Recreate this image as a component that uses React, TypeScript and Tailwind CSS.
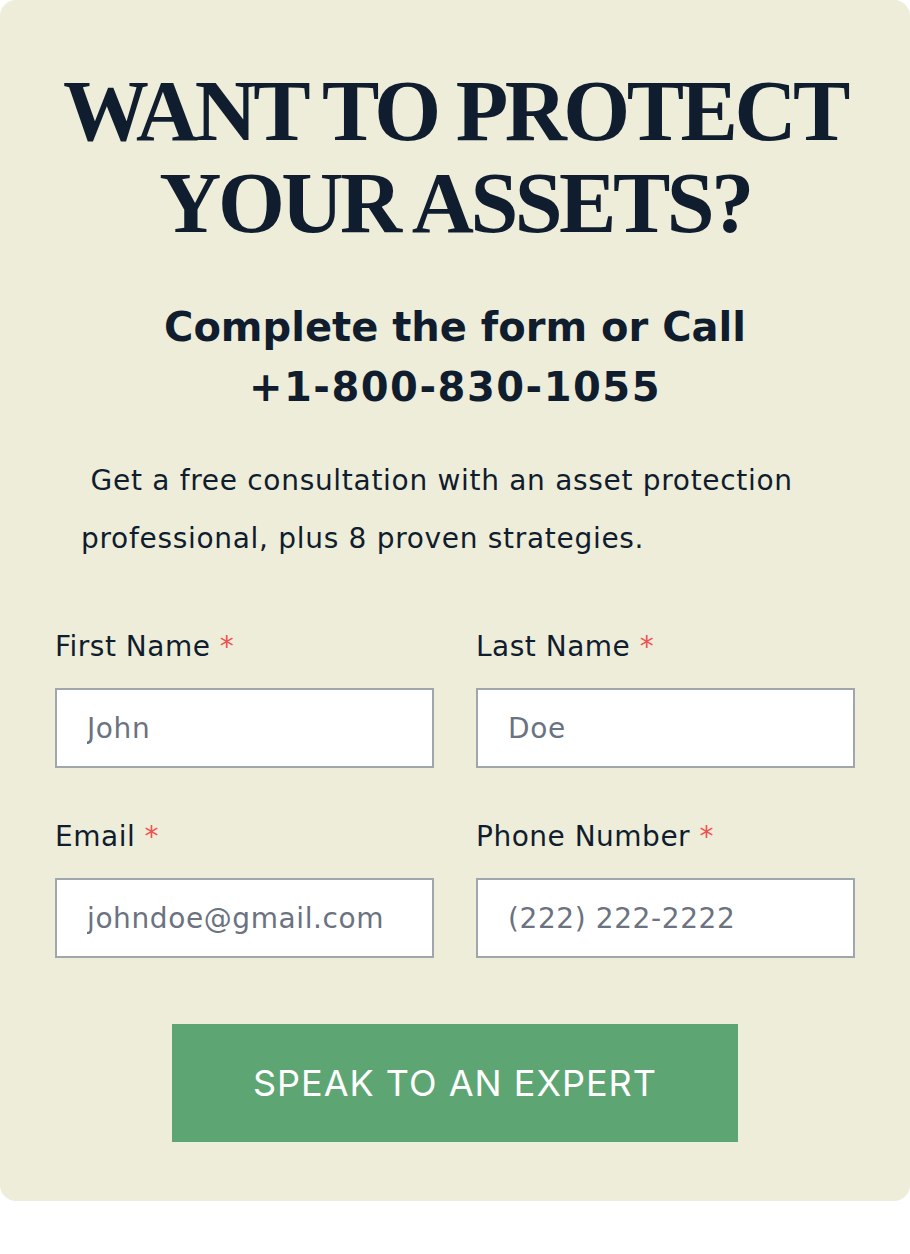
import React from 'react';

const fields = [
  { label: 'First Name', placeholder: 'John', type: 'text' },
  { label: 'Last Name', placeholder: 'Doe', type: 'text' },
  { label: 'Email', placeholder: 'johndoe@gmail.com', type: 'email' },
  { label: 'Phone Number', placeholder: '(222) 222-2222', type: 'tel' },
];

export default function App() {
  return (
    <div className="min-h-[1254px] bg-white font-['DejaVu_Sans',sans-serif] text-[#0f1d2e]">
      <div className="rounded-2xl bg-[#eeedd9] px-[55px] pb-[59px] pt-[65px]">
        <h1 className="text-center font-['Liberation_Serif',serif] text-[86px] font-bold uppercase leading-[92px] tracking-[-3.5px]">
          Want to protect your assets?
        </h1>

        <h2 className="mt-[48px] text-center text-[40px] font-bold leading-[60px]">
          Complete the form or Call
          <br />
          <span className="tracking-[1.5px]">+1-800-830-1055</span>
        </h2>

        <p className="mt-[35px] px-[26px] text-[28px] leading-[58px] tracking-[0.7px]">
          &nbsp;Get a free consultation with an asset protection professional, plus 8 proven strategies.
        </p>

        <form className="mt-[62px]" onSubmit={(e) => e.preventDefault()}>
          <div className="grid grid-cols-2 gap-x-[42px] gap-y-[52px]">
            {fields.map((f) => (
              <label key={f.label} className="flex flex-col">
                <span className="text-[28px] leading-[34px] tracking-[0.5px]">
                  {f.label} <span className="text-[#f05252]">*</span>
                </span>
                <input
                  type={f.type}
                  placeholder={f.placeholder}
                  className="mt-[24px] h-[80px] w-full border-2 border-[#a0a6ad] bg-white px-[30px] text-[28px] tracking-[0.6px] text-[#0f1d2e] outline-none placeholder:text-[#6b7280]"
                />
              </label>
            ))}
          </div>

          <div className="mt-[66px] flex justify-center">
            <button
              type="submit"
              className="h-[118px] w-[566px] bg-[#5da674] font-['Inter',sans-serif] text-[36px] font-normal uppercase tracking-[1px] text-white"
            >
              Speak to an expert
            </button>
          </div>
        </form>
      </div>
    </div>
  );
}
